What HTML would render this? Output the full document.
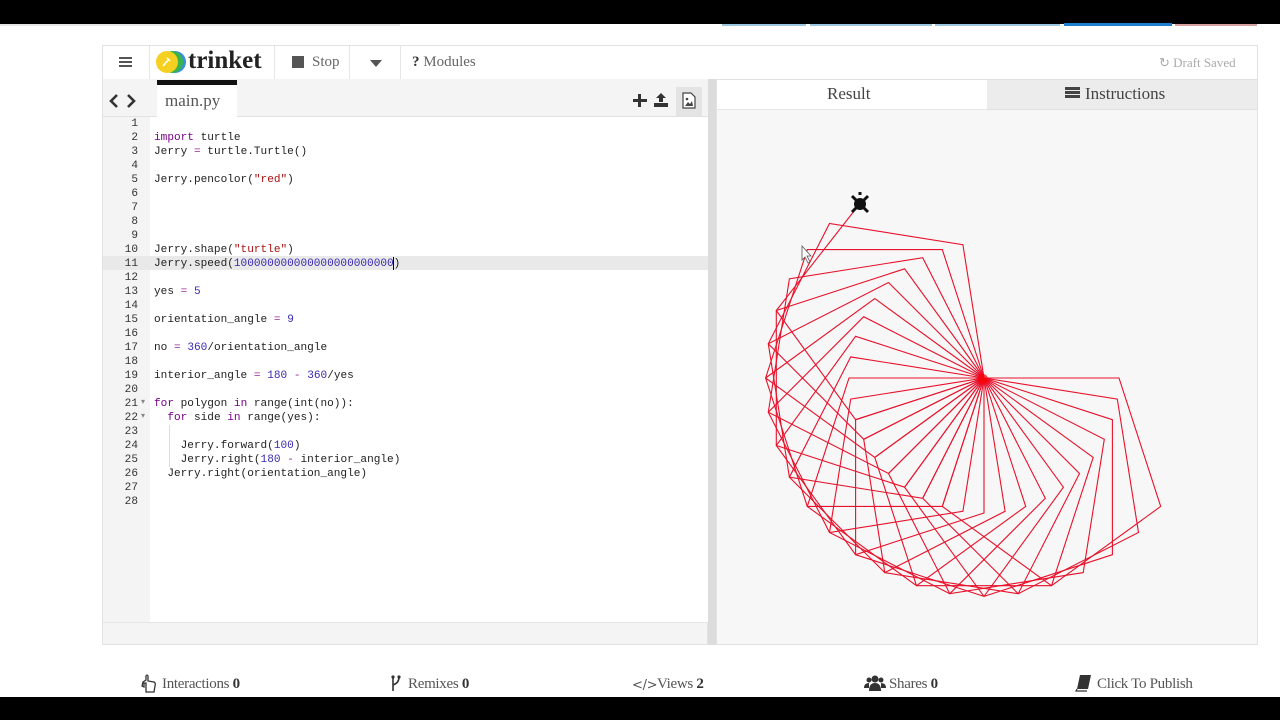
<!DOCTYPE html>
<html><head><meta charset="utf-8">
<style>
*{margin:0;padding:0;box-sizing:border-box}
body{width:1280px;height:720px;background:#fff;position:relative;overflow:hidden;font-family:"Liberation Serif",serif;color:#444}
.abs{position:absolute}
.code{font-family:"Liberation Mono",monospace;font-size:11.1px;line-height:14px;color:#222;white-space:pre}
.k{color:#770088}.s{color:#aa1111}.n{color:#3a2ab0}.o{color:#9a2a9a}
.ln{position:absolute;left:102px;width:36px;text-align:right;color:#333;font-family:"Liberation Mono",monospace;font-size:11.1px;line-height:14px}
.foot{position:absolute;top:676px;font-size:15px;color:#555;font-family:"Liberation Serif",serif;letter-spacing:-0.3px}
.foot b{color:#333}
</style></head><body>
<div class="abs" style="left:0;top:0;width:1280px;height:24px;background:#000"></div>
<div class="abs" style="left:0;top:697px;width:1280px;height:23px;background:#000"></div>
<div class="abs" style="left:0;top:24px;width:400px;height:2px;background:#e6e6e6"></div>
<div class="abs" style="left:722px;top:24px;width:84px;height:2px;background:#9cc7e0"></div>
<div class="abs" style="left:810px;top:24px;width:122px;height:2px;background:#9cc7e0"></div>
<div class="abs" style="left:935px;top:24px;width:125px;height:2px;background:#9cc7e0"></div>
<div class="abs" style="left:1064px;top:23px;width:108px;height:3px;background:#1a7fd0"></div>
<div class="abs" style="left:1175px;top:24px;width:82px;height:2px;background:#d9a0a0"></div>

<!-- toolbar -->
<div class="abs" style="left:102px;top:45px;width:1156px;height:35px;border:1px solid #e2e2e2;background:#fff"></div>
<div class="abs" style="left:149px;top:46px;width:1px;height:33px;background:#e6e6e6"></div>
<div class="abs" style="left:274px;top:46px;width:1px;height:33px;background:#e6e6e6"></div>
<div class="abs" style="left:349px;top:46px;width:1px;height:33px;background:#e6e6e6"></div>
<div class="abs" style="left:400px;top:46px;width:1px;height:33px;background:#e6e6e6"></div>
<div class="abs" style="left:119px;top:57px;width:13px;height:2px;background:#555;box-shadow:0 4px 0 #555,0 8px 0 #555"></div>
<svg class="abs" style="left:155px;top:50px" width="32" height="24" viewBox="0 0 32 24">
<circle cx="20" cy="12" r="11" fill="#3a8fd8"/><circle cx="17" cy="12" r="11" fill="#3ab44a"/><circle cx="12" cy="12" r="11" fill="#f5d020"/>
<path d="M8 16 L14 9 M12 8 l3 3" stroke="#fff" stroke-width="1.6" fill="none"/></svg>
<div class="abs" style="left:188px;top:47px;font-size:25px;font-weight:bold;color:#222;font-family:'Liberation Serif',serif">trinket</div>
<div class="abs" style="left:292px;top:56px;width:12px;height:12px;background:#555"></div>
<div class="abs" style="left:312px;top:54px;font-size:15px;color:#666">Stop</div>
<div class="abs" style="left:370px;top:60px;width:0;height:0;border-left:6px solid transparent;border-right:6px solid transparent;border-top:7px solid #555"></div>
<div class="abs" style="left:412px;top:54px;font-size:15px;color:#666"><b style="color:#333">?</b> Modules</div>
<div class="abs" style="left:1159px;top:55px;font-size:13px;color:#aaa">&#x21bb; Draft Saved</div>

<!-- editor -->
<div class="abs" style="left:102px;top:79px;width:606px;height:38px;background:#f4f4f4;border-left:1px solid #e2e2e2;border-bottom:1px solid #e2e2e2"></div>
<svg class="abs" style="left:107px;top:93px" width="32" height="16" viewBox="0 0 32 16"><path d="M10 2 L4 8 L10 14 M21 2 L27 8 L21 14" fill="none" stroke="#333" stroke-width="2.6"/></svg>
<div class="abs" style="left:157px;top:80px;width:80px;height:37px;background:#fff;border-top:5px solid #111"></div>
<div class="abs" style="left:165px;top:91px;font-size:17px;color:#555">main.py</div>
<div class="abs" style="left:633px;top:99px;width:14px;height:3px;background:#333"></div>
<div class="abs" style="left:638px;top:94px;width:3px;height:13px;background:#333"></div>
<svg class="abs" style="left:653px;top:92px" width="16" height="16" viewBox="0 0 16 16"><path d="M8 1 L3 6 H6 V10 H10 V6 H13 Z" fill="#333"/><path d="M1 11 H15 V15 H1 Z" fill="#333"/></svg>
<div class="abs" style="left:676px;top:87px;width:26px;height:29px;background:#e4e4e4"></div>
<svg class="abs" style="left:682px;top:92px" width="14" height="17" viewBox="0 0 14 17"><path d="M1 1 H9 L13 5 V16 H1 Z" fill="#fff" stroke="#444" stroke-width="1.2"/><path d="M3 14 L6 10 L8 12 L10 9 L11 14 Z" fill="#444"/><circle cx="5" cy="7" r="1.3" fill="#444"/></svg>
<div class="abs" style="left:102px;top:117px;width:606px;height:506px;background:#fff;border-left:1px solid #e2e2e2"></div>
<div class="abs" style="left:103px;top:117px;width:47px;height:506px;background:#f4f4f4"></div>
<div class="abs" style="left:103px;top:256px;width:605px;height:14px;background:#e9e9e9"></div>
<div class="abs" style="left:102px;top:622px;width:606px;height:23px;background:#f4f4f4;border:1px solid #e2e2e2;border-top:1px solid #e6e6e6"></div>
<div class="abs" style="left:708px;top:79px;width:8px;height:566px;background:#dcdcdc"></div>

<div class="abs code" style="left:154px;top:117px"> 
<span class="k">import</span> turtle
Jerry <span class="o">=</span> turtle.Turtle()

Jerry.pencolor(<span class="s">"red"</span>)




Jerry.shape(<span class="s">"turtle"</span>)
Jerry.speed(<span class="n">100000000000000000000000</span>)

yes <span class="o">=</span> <span class="n">5</span>

orientation_angle <span class="o">=</span> <span class="n">9</span>

no <span class="o">=</span> <span class="n">360</span>/orientation_angle

interior_angle <span class="o">=</span> <span class="n">180</span> <span class="o">-</span> <span class="n">360</span>/yes

<span class="k">for</span> polygon <span class="k">in</span> range(int(no)):
  <span class="k">for</span> side <span class="k">in</span> range(yes):

    Jerry.forward(<span class="n">100</span>)
    Jerry.right(<span class="n">180</span> <span class="o">-</span> interior_angle)
  Jerry.right(orientation_angle)
</div>
<div class="abs" style="left:393px;top:257px;width:1px;height:13px;background:#000"></div>
<div class="abs ln" style="top:117px">1<br>2<br>3<br>4<br>5<br>6<br>7<br>8<br>9<br>10<br>11<br>12<br>13<br>14<br>15<br>16<br>17<br>18<br>19<br>20<br>21<br>22<br>23<br>24<br>25<br>26<br>27<br>28</div>
<div class="abs" style="left:141px;top:397px;font-size:8px;color:#888">&#9662;</div>
<div class="abs" style="left:141px;top:411px;font-size:8px;color:#888">&#9662;</div>
<div class="abs" style="left:169px;top:425px;width:1px;height:42px;background:#ddd"></div>

<!-- right panel -->
<div class="abs" style="left:716px;top:79px;width:542px;height:566px;background:#f7f7f7;border:1px solid #e2e2e2"></div>
<div class="abs" style="left:717px;top:80px;width:270px;height:30px;background:#fff;border-bottom:1px solid #e6e6e6"></div>
<div class="abs" style="left:987px;top:80px;width:270px;height:30px;background:#ececec;border-bottom:1px solid #e0e0e0"></div>
<div class="abs" style="left:827px;top:84px;font-size:17px;color:#444">Result</div>
<div class="abs" style="left:1065px;top:87px;width:15px;height:3px;background:#444;box-shadow:0 4px 0 #444,0 8px 0 #444"></div>
<div class="abs" style="left:1085px;top:84px;font-size:17px;color:#444">Instructions</div>
<svg class="abs" style="left:0;top:0" width="1280" height="720" id="sv">
<g id="pg" fill="none" stroke="#e8102a" stroke-width="1.1"></g>
<circle cx="860" cy="204" r="6" fill="#111"/>
<path d="M852 196 l4 4 M868 196 l-4 4 M852 212 l4 -4 M868 212 l-4 -4 M860 195 v-3" stroke="#111" stroke-width="3"/>
<circle cx="983" cy="379" r="5" fill="#f00" opacity="0.7"/>
<path d="M802 246 L802 260 L805 257 L808 263 L810 262 L807 256 L811 256 Z" fill="#fff" stroke="#555" stroke-width="0.8"/>
</svg>
<script>
(function(){var g=document.getElementById('pg'),cx=984,cy=378,s=135,out='';
function u(a){a=a*Math.PI/180;return [Math.cos(a),Math.sin(a)];}
for(var h=0;h<=153;h+=9){var x=cx,y=cy,p=x+','+y;for(var k=0;k<5;k++){var d=u(h+72*k);x+=s*d[0];y+=s*d[1];p+=' '+x.toFixed(1)+','+y.toFixed(1);}
out+='<polyline points="'+p+'"/>';}
var h=162,x=cx,y=cy,p=x+','+y;for(var k=0;k<2;k++){var d=u(h+72*k);x+=s*d[0];y+=s*d[1];p+=' '+x.toFixed(1)+','+y.toFixed(1);}
p+=' 858,206';out+='<polyline points="'+p+'"/>';
g.innerHTML=out;})();
</script>

<!-- footer -->
<svg class="abs" style="left:141px;top:674px" width="16" height="20" viewBox="0 0 16 20"><path d="M5 18 V9 L3 9 L3 13 L1 12 L2 8 L5 6 V2 Q6 0 7 2 V7 L13 8 Q15 9 14 12 L13 18 Z" fill="none" stroke="#333" stroke-width="1.3"/></svg>
<div class="foot" style="left:162px">Interactions <b>0</b></div>
<svg class="abs" style="left:390px;top:675px" width="12" height="18" viewBox="0 0 12 18"><path d="M3 2 V16 M3 10 Q9 8 9 2" fill="none" stroke="#333" stroke-width="1.6"/><circle cx="3" cy="2" r="1.6" fill="#333"/><circle cx="9" cy="2" r="1.6" fill="#333"/></svg>
<div class="foot" style="left:408px">Remixes <b>0</b></div>
<div class="foot" style="left:632px;font-family:'DejaVu Sans',sans-serif;font-size:13px;top:678px">&lt;/&gt;</div>
<div class="foot" style="left:657px">Views <b>2</b></div>
<svg class="abs" style="left:864px;top:674px" width="22" height="18" viewBox="0 0 22 18"><circle cx="11" cy="5" r="3.5" fill="#333"/><circle cx="5" cy="6" r="2.5" fill="#333"/><circle cx="17" cy="6" r="2.5" fill="#333"/><path d="M5 17 Q5 9 11 9 Q17 9 17 17 Z M0 14 Q0 9 5 9 L5 14 Z M22 14 Q22 9 17 9 L17 14Z" fill="#333"/></svg>
<div class="foot" style="left:889px">Shares <b>0</b></div>
<svg class="abs" style="left:1075px;top:674px" width="18" height="18" viewBox="0 0 18 18"><path d="M5 1 H16 L13 15 H2 Z" fill="#333"/><path d="M2 15 L1 17 H12" stroke="#333" fill="none" stroke-width="1.2"/></svg>
<div class="foot" style="left:1097px">Click To Publish</div>
</body></html>
